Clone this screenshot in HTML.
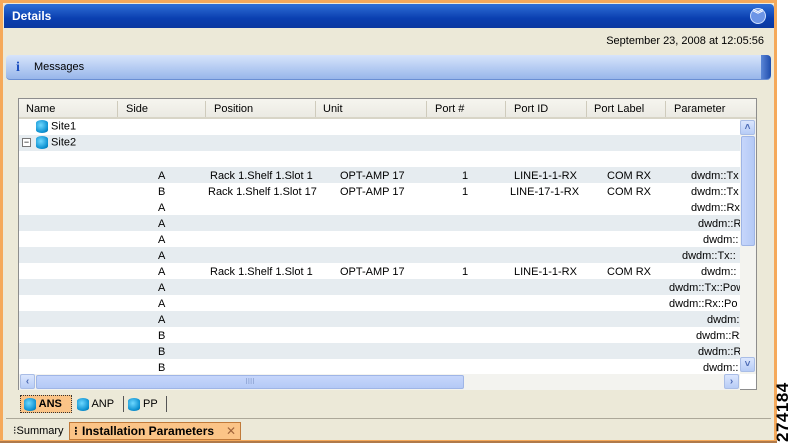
<!DOCTYPE html>
<html><head><style>
*{margin:0;padding:0;box-sizing:border-box}
body{width:792px;height:445px;background:#fff;font-family:"Liberation Sans",sans-serif;font-size:11px;color:#000;position:relative;overflow:hidden}
.frame{position:absolute;left:0;top:0;width:777px;height:443px;background:#ece9d8;border:3px solid #f5a95a;border-top-width:3px}
.title{position:absolute;left:4px;top:4px;width:770px;height:24px;background:linear-gradient(#2f6fd6,#0a3fb0 60%,#0a38a0);border-radius:4px 4px 0 0;color:#fff;font-weight:bold;font-size:12px;line-height:24px;padding-left:8px}
.chev{position:absolute;right:8px;top:4px;width:16px;height:16px;border-radius:50%;background:#6d95e6;border:1px solid #cfe0ff;color:#fff;font-size:10px;line-height:13px;text-align:center}
.date{position:absolute;right:28px;top:35px;font-size:11px}
.msg{position:absolute;left:6px;top:55px;width:765px;height:25px;background:linear-gradient(#d7e4fb,#b1c9f1 60%,#98b6ea);border-radius:4px;border-bottom:1px solid #6a8fd3;line-height:25px;padding-left:28px}
.msg i{position:absolute;left:10px;top:0;color:#1b4fbf;font-style:normal;font-weight:bold;font-family:"Liberation Serif",serif;font-size:14px}
.msgend{position:absolute;right:0;top:0;width:10px;height:24px;background:linear-gradient(90deg,#5b87d6,#1e4cad);border-radius:0 4px 4px 0}
.tbl{position:absolute;left:18px;top:98px;width:739px;height:292px;background:#fff;border:1px solid #8d8d8d}
.hdr{position:absolute;left:0;top:0;width:737px;height:20px;background:linear-gradient(#f6f5ef,#ebeae3);border-bottom:2px solid #d8d5c7}
.hdr span{position:absolute;top:4px}
.hdr b{position:absolute;top:2px;width:1px;height:16px;background:#cfcbbc}
.row{position:absolute;left:0;width:721px;height:16px}
.sh{background:#e6ecf0}
.row span{position:absolute;top:3px;white-space:nowrap}
.vs{position:absolute;left:721px;top:20px;width:16px;height:255px;background:#f3f3ef}
.thumb{position:absolute;left:1px;top:17px;width:14px;height:110px;background:linear-gradient(90deg,#c6d6fb,#b4c9f6);border:1px solid #9fb5e6;border-radius:2px}
.btn{position:absolute;width:15px;height:15px;background:linear-gradient(#dbe6fd,#b7ccf6);border:1px solid #a9bde6;border-radius:2px;color:#4d6bb5;font-size:10px;text-align:center;line-height:13px;font-weight:bold}
.hs{position:absolute;left:0;top:275px;width:721px;height:16px;background:#f3f3ef}
.cyl{display:inline-block;width:12px;height:13px;background:radial-gradient(circle at 40% 40%,#6fd8ff,#0a8fd0 70%,#06608c);border-radius:6px/3px;vertical-align:middle}
.tb{position:absolute;top:395px;height:18px;line-height:18px}
.tabs{position:absolute;left:6px;top:418px;width:765px;height:1px;background:#aca899}
.ip{position:absolute;left:69px;top:422px;width:172px;height:18px;background:#fbc487;border:1px solid #c07a3a;font-weight:bold;font-size:12px;line-height:16px;padding-left:12px}
.num{position:absolute;transform:rotate(-90deg);transform-origin:0 0;font-weight:bold;font-size:17px;width:80px;left:773px;top:442px;letter-spacing:0.5px}
</style></head><body>
<div class="frame"></div>
<div class="title">Details<div class="chev">︾</div></div>
<div class="date">September 23, 2008 at 12:05:56</div>
<div class="msg"><i>i</i>Messages<div class="msgend"></div></div>
<div class="tbl">
<div class="hdr">
<span style="left:7px">Name</span><b style="left:98px"></b>
<span style="left:107px">Side</span><b style="left:186px"></b>
<span style="left:195px">Position</span><b style="left:296px"></b>
<span style="left:304px">Unit</span><b style="left:407px"></b>
<span style="left:416px">Port #</span><b style="left:486px"></b>
<span style="left:495px">Port ID</span><b style="left:567px"></b>
<span style="left:575px">Port Label</span><b style="left:646px"></b>
<span style="left:655px">Parameter</span>
</div>
<div class="row" style="top:20px"><span style="left:17px;top:1px"><i class="cyl"></i> Site1</span></div>
<div class="row sh" style="top:36px"><span style="left:3px;top:3px;width:9px;height:9px;border:1px solid #777;background:#fff;font-size:9px;line-height:6px;text-align:center">−</span><span style="left:17px;top:1px"><i class="cyl"></i> Site2</span></div>
<div class="row" style="top:52px"></div>
<div class="row sh" style="top:68px"><span style="left:139px">A</span><span style="left:191px">Rack 1.Shelf 1.Slot 1</span><span style="left:321px">OPT-AMP 17</span><span style="left:443px">1</span><span style="left:495px">LINE-1-1-RX</span><span style="left:588px">COM RX</span><span style="left:672px">dwdm::Tx</span></div>
<div class="row" style="top:84px"><span style="left:139px">B</span><span style="left:189px">Rack 1.Shelf 1.Slot 17</span><span style="left:321px">OPT-AMP 17</span><span style="left:443px">1</span><span style="left:491px">LINE-17-1-RX</span><span style="left:588px">COM RX</span><span style="left:672px">dwdm::Tx</span></div>
<div class="row" style="top:100px"><span style="left:139px">A</span><span style="left:672px">dwdm::Rx</span></div>
<div class="row sh" style="top:116px"><span style="left:139px">A</span><span style="left:679px">dwdm::R</span></div>
<div class="row" style="top:132px"><span style="left:139px">A</span><span style="left:684px">dwdm::</span></div>
<div class="row sh" style="top:148px"><span style="left:139px">A</span><span style="left:663px">dwdm::Tx::</span></div>
<div class="row" style="top:164px"><span style="left:139px">A</span><span style="left:191px">Rack 1.Shelf 1.Slot 1</span><span style="left:321px">OPT-AMP 17</span><span style="left:443px">1</span><span style="left:495px">LINE-1-1-RX</span><span style="left:588px">COM RX</span><span style="left:682px">dwdm::</span></div>
<div class="row sh" style="top:180px"><span style="left:139px">A</span><span style="left:650px">dwdm::Tx::Pow</span></div>
<div class="row" style="top:196px"><span style="left:139px">A</span><span style="left:650px">dwdm::Rx::Po</span></div>
<div class="row sh" style="top:212px"><span style="left:139px">A</span><span style="left:688px">dwdm:</span></div>
<div class="row" style="top:228px"><span style="left:139px">B</span><span style="left:677px">dwdm::Rx</span></div>
<div class="row sh" style="top:244px"><span style="left:139px">B</span><span style="left:679px">dwdm::R</span></div>
<div class="row" style="top:260px;height:15px;overflow:hidden"><span style="left:139px">B</span><span style="left:684px">dwdm::</span></div>
<div class="vs"><div class="btn" style="left:0;top:1px">˄</div><div class="thumb"></div><div class="btn" style="left:0;top:238px">˅</div></div>
<div class="hs"><div class="btn" style="left:1px;top:0">‹</div><div style="position:absolute;left:17px;top:1px;width:428px;height:14px;background:linear-gradient(#c6d6fb,#b4c9f6);border:1px solid #9fb5e6;border-radius:2px;text-align:center;font-size:8px;color:#8aa0d0;line-height:12px">IIII</div><div class="btn" style="left:705px;top:0">›</div></div>
</div>
<div class="tb" style="left:20px;width:52px;background:#fbc487;border:1px dotted #333;font-weight:bold;padding-left:3px;line-height:16px"><i class="cyl"></i> ANS</div>
<div class="tb" style="left:77px"><i class="cyl"></i> ANP</div>
<div class="tb" style="left:123px;width:1px;height:16px;top:396px;background:#555"></div>
<div class="tb" style="left:128px"><i class="cyl"></i> PP</div>
<div class="tb" style="left:166px;width:1px;height:16px;top:396px;background:#555"></div>
<div class="tabs"></div>
<div style="position:absolute;left:13px;top:424px;font-size:11px">⁝Summary</div>
<div class="ip"><span style="position:absolute;left:4px">⁝</span>Installation Parameters<span style="position:absolute;right:4px;color:#a0643a;font-weight:normal">✕</span></div>
<div style="position:absolute;left:0;top:441px;width:777px;height:2px;background:#b07a4a"></div>
<div class="num">274184</div>
</body></html>
